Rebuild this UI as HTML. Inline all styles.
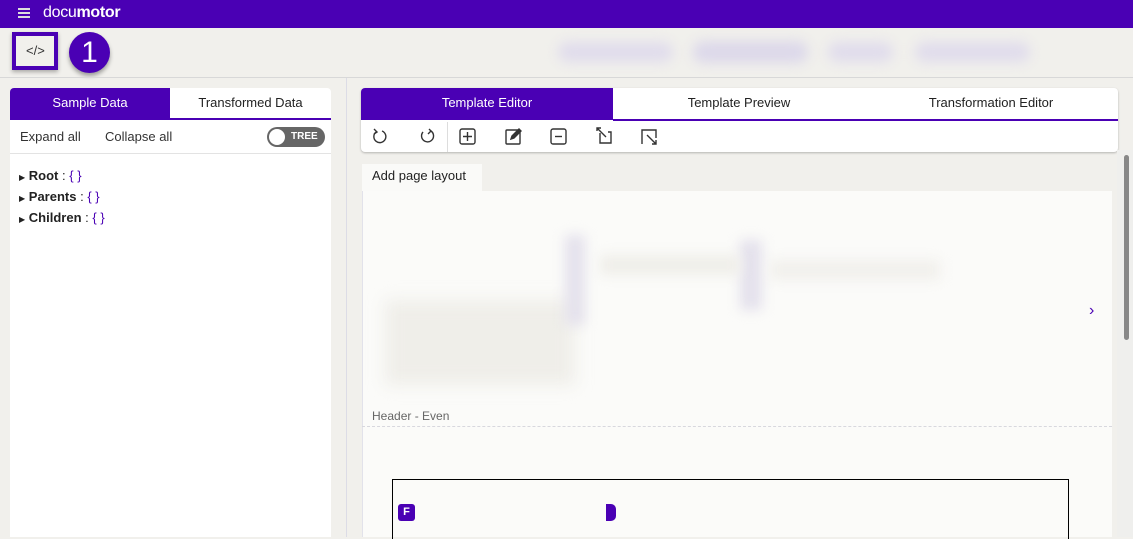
<!DOCTYPE html>
<html><head><style>
*{box-sizing:border-box;margin:0;padding:0}
body{width:1133px;height:537px;overflow:hidden;background:#f1f0ec;font-family:"Liberation Sans",sans-serif;position:relative;font-size:13px;color:#222}
.abs{position:absolute}
.blur{position:absolute;filter:blur(6px)}
.tr div{height:21px;line-height:21px}
</style></head><body>
<div class="abs" style="left:0;top:0;width:1133px;height:28px;background:#4a00b4"></div>
<div class="abs" style="left:18px;top:8px;width:12px;height:2px;background:#ddd;box-shadow:0 4px 0 #ddd,0 8px 0 #ddd"></div>
<div class="abs" style="left:43px;top:4px;color:#fff;font-size:16px;letter-spacing:-0.3px">docu<b>motor</b></div>
<div class="abs" style="left:12px;top:32px;width:46px;height:38px;border:4px solid #4a00b4;background:#f1f0ec;box-shadow:0 2px 4px rgba(0,0,0,.3)"></div>
<div class="abs" style="left:26px;top:43px;font-size:13px;color:#333">&lt;/&gt;</div>
<div class="abs" style="left:69px;top:32px;width:41px;height:41px;border-radius:50%;background:#4a00b4;color:#fff;font-size:30px;text-align:center;line-height:41px;box-shadow:0 3px 4px rgba(0,0,0,.35)">1</div>
<div class="blur" style="left:558px;top:42px;width:115px;height:20px;background:#e0dcec;border-radius:10px"></div>
<div class="blur" style="left:693px;top:41px;width:115px;height:22px;background:#dcd8ea;border-radius:10px"></div>
<div class="blur" style="left:828px;top:42px;width:65px;height:20px;background:#e0dcec;border-radius:10px"></div>
<div class="blur" style="left:915px;top:42px;width:115px;height:20px;background:#e0dcec;border-radius:10px"></div>
<div class="abs" style="left:0;top:77px;width:1133px;height:1px;background:#d8d8d8"></div>
<div class="abs" style="left:346px;top:78px;width:1px;height:459px;background:#dcdce6"></div>
<div class="abs" style="left:10px;top:88px;width:321px;height:449px;background:#fff;border-radius:4px 4px 0 0"></div>
<div class="abs" style="left:10px;top:88px;width:160px;height:32px;background:#4a00b4;color:#fff;text-align:center;line-height:30px;border-radius:4px 0 0 0">Sample Data</div>
<div class="abs" style="left:170px;top:88px;width:161px;height:32px;text-align:center;line-height:30px;border-bottom:2px solid #4a00b4">Transformed Data</div>
<div class="abs" style="left:20px;top:129px;color:#333">Expand all</div>
<div class="abs" style="left:105px;top:129px;color:#333">Collapse all</div>
<div class="abs" style="left:267px;top:127px;width:58px;height:20px;border-radius:10px;background:#666;color:#fff;font-size:10px;font-weight:bold;line-height:20px;padding-left:24px">TREE</div>
<div class="abs" style="left:269px;top:129px;width:16px;height:16px;border-radius:50%;background:#fff"></div>
<div class="abs" style="left:10px;top:153px;width:321px;height:1px;background:#e3e3e3"></div>
<div class="abs tr" style="left:19px;top:165px;font-size:13px">
<div><span style="font-size:8px">▶</span> <b>Root</b> : <span style="color:#4a00b4">{ }</span></div>
<div><span style="font-size:8px">▶</span> <b>Parents</b> : <span style="color:#4a00b4">{ }</span></div>
<div><span style="font-size:8px">▶</span> <b>Children</b> : <span style="color:#4a00b4">{ }</span></div>
</div>
<div class="abs" style="left:361px;top:88px;width:757px;height:64px;background:#fff;border-radius:4px;box-shadow:0 1px 2px rgba(0,0,0,.25)"></div>
<div class="abs" style="left:361px;top:88px;width:252px;height:32px;background:#4a00b4;color:#fff;text-align:center;line-height:30px;border-radius:4px 0 0 0">Template Editor</div>
<div class="abs" style="left:613px;top:88px;width:505px;height:33px;border-bottom:2px solid #4a00b4"></div>
<div class="abs" style="left:613px;top:88px;width:252px;line-height:30px;text-align:center">Template Preview</div>
<div class="abs" style="left:865px;top:88px;width:252px;line-height:30px;text-align:center">Transformation Editor</div>
<div class="abs" style="left:447px;top:122px;width:1px;height:30px;background:#ddd"></div>
<svg class="abs" style="left:361px;top:122px" width="320" height="30" fill="none" stroke="#333" stroke-width="1.4">
<path d="M15 10 A6 6 0 1 0 21 9"/><path d="M13 7 L16 10 L13 12"/>
<path d="M70 9 A6 6 0 1 1 62 10"/><path d="M68 7 L70 9 L67 12"/>
<rect x="99" y="7" width="15" height="15" rx="2"/><path d="M106.5 10v9M102 14.5h9"/>
<rect x="145" y="8" width="14" height="14" rx="1"/><path d="M150 17l1-3 7-7 2 2-7 7z" fill="#333"/>
<rect x="190" y="7" width="15" height="15" rx="2"/><path d="M194 14.5h7"/>
<path d="M236 9v-3h4M236 6l9 9M239 11v10h11v-11h-3"/>
<path d="M281 22v-14h14v8M286 13l9 9M295 18v4h-4"/>
</svg>
<div class="abs" style="left:362px;top:164px;width:120px;height:27px;background:#fafaf8;line-height:24px;padding-left:10px;color:#222">Add page layout</div>
<div class="abs" style="left:362px;top:191px;width:750px;height:346px;background:#fbfbf9;border-left:1px solid #e2e2ea"></div>
<div class="blur" style="left:385px;top:300px;width:190px;height:85px;background:#efeee9;filter:blur(8px)"></div>
<div class="blur" style="left:565px;top:235px;width:20px;height:90px;background:#e4e1ec"></div>
<div class="blur" style="left:740px;top:240px;width:22px;height:70px;background:#e4e1ec"></div>
<div class="blur" style="left:600px;top:255px;width:140px;height:20px;background:#efeee9"></div>
<div class="blur" style="left:770px;top:260px;width:170px;height:20px;background:#f1f0ec"></div>
<div class="abs" style="left:1089px;top:302px;color:#4a00b4;font-size:16px">›</div>
<div class="abs" style="left:372px;top:409px;color:#666;font-size:12px">Header - Even</div>
<div class="abs" style="left:362px;top:426px;width:750px;border-top:1px dashed #d8d8de"></div>
<div class="abs" style="left:392px;top:479px;width:677px;height:60px;border:1px solid #000;border-bottom:none"></div>
<div class="abs" style="left:398px;top:504px;width:17px;height:17px;background:#4a00b4;border-radius:3px;color:#fff;font-size:11px;font-weight:bold;text-align:center;line-height:17px">F</div>
<div class="abs" style="left:606px;top:504px;width:10px;height:17px;background:#4a00b4;border-radius:0 5px 5px 0"></div>
<div class="abs" style="left:1117px;top:150px;width:16px;height:387px;background:#efefed"></div>
<div class="abs" style="left:1124px;top:155px;width:5px;height:185px;background:#888;border-radius:3px"></div>
</body></html>
